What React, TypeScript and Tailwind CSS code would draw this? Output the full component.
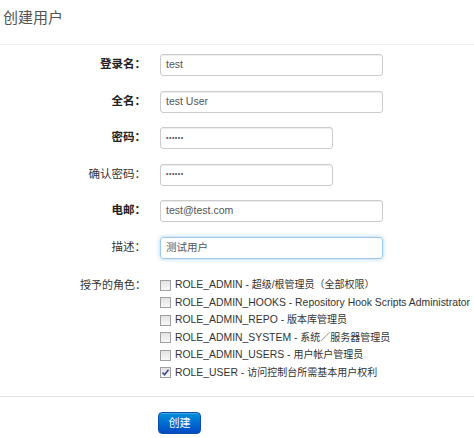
import React from 'react';

const fields = [
  { label: '登录名：', value: 'test', bold: true, w: 'w-[223px]' },
  { label: '全名：', value: 'test User', bold: true, w: 'w-[223px]' },
  { label: '密码：', value: '••••••', bold: true, w: 'w-[173px]', pw: true },
  { label: '确认密码：', value: '••••••', bold: false, w: 'w-[173px]', pw: true },
  { label: '电邮：', value: 'test@test.com', bold: true, w: 'w-[223px]' },
  { label: '描述：', value: '测试用户', bold: false, w: 'w-[223px]', focus: true },
];

const roles = [
  { name: 'ROLE_ADMIN', desc: '超级/根管理员（全部权限）', cjk: true, checked: false },
  { name: 'ROLE_ADMIN_HOOKS', desc: 'Repository Hook Scripts Administrator', cjk: false, checked: false },
  { name: 'ROLE_ADMIN_REPO', desc: '版本库管理员', cjk: true, checked: false },
  { name: 'ROLE_ADMIN_SYSTEM', desc: '系统／服务器管理员', cjk: true, checked: false },
  { name: 'ROLE_ADMIN_USERS', desc: '用户帐户管理员', cjk: true, checked: false },
  { name: 'ROLE_USER', desc: '访问控制台所需基本用户权利', cjk: true, checked: true },
];

const Check = ({ checked }: { checked: boolean }) => (
  <span className="w-[11px] h-[11px] border border-[#a0a0a0] bg-gradient-to-b from-[#e2e2e2] to-[#f8f8f8] flex items-center justify-center shrink-0">
    {checked && (
      <svg width="9" height="9" viewBox="0 0 9 9">
        <path d="M1.5 4.5 L3.5 6.8 L7.5 1.8" stroke="#3a4a8a" strokeWidth="1.6" fill="none" />
      </svg>
    )}
  </span>
);

export default function App() {
  return (
    <div
      className="w-[474px] h-[438px] bg-white text-[#333] overflow-hidden"
      style={{ fontFamily: '"Liberation Sans", Arial, "Noto Sans CJK SC", sans-serif' }}
    >
      <div className="h-[45px] border-b border-[#eeeeee] pl-[3px] pt-[7px]">
        <h1 className="text-[15px] leading-[22px] text-[#555] font-normal">创建用户</h1>
      </div>

      <div className="pt-[9px] flex flex-col gap-y-[14.5px]">
        {fields.map((f) => (
          <div key={f.label} className="flex items-center h-[22px]">
            <label
              className={`w-[146px] shrink-0 text-right text-[11.5px] ${f.bold ? 'font-bold text-[#222]' : 'text-[#333]'}`}
            >
              {f.label}
            </label>
            <div
              className={`ml-[14px] h-[22px] ${f.w} rounded-[3px] border px-[5px] flex items-center text-[10.5px] text-[#555] ${
                f.focus
                  ? 'border-[#9ecaed] shadow-[0_0_4px_rgba(82,168,236,0.5)]'
                  : 'border-[#cccccc] shadow-[inset_0_1px_1px_rgba(0,0,0,0.075)]'
              }`}
            >
              <span className={f.pw ? 'text-[7px] tracking-[0.5px]' : ''}>{f.value}</span>
            </div>
          </div>
        ))}
      </div>

      <div className="flex mt-[18px]">
        <div className="w-[146px] shrink-0 text-right text-[11px] leading-[17.5px] text-[#333]">授予的角色：</div>
        <div className="ml-[14px] flex flex-col">
          {roles.map((r) => (
            <div key={r.name} className="flex items-center h-[17.5px] text-[10.4px] text-[#333] whitespace-nowrap">
              <Check checked={r.checked} />
              <span className="ml-[4px]">
                {r.name} - <span className={r.cjk ? 'text-[10px]' : ''}>{r.desc}</span>
              </span>
            </div>
          ))}
        </div>
      </div>

      <div className="mt-[14px] border-t border-[#e5e5e5] pt-[13px] pl-[158px]">
        <button className="w-[43px] h-[22px] rounded-[4px] border border-[#0a4fa8] bg-gradient-to-b from-[#0a8fdc] to-[#0448c4] text-white text-[11px] shadow-[inset_0_1px_0_rgba(255,255,255,0.2)]">
          创建
        </button>
      </div>
    </div>
  );
}
